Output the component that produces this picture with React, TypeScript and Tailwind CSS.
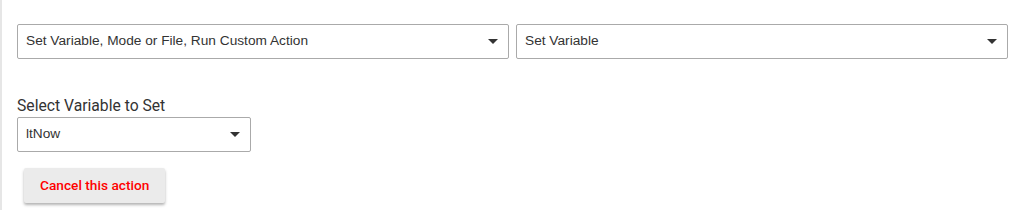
const Caret = () => (
  <svg width="10" height="5" viewBox="0 0 10 5" className="shrink-0">
    <path d="M0 0h10L5 5z" fill="#333" />
  </svg>
)

function Select({ value, className }: { value: string; className: string }) {
  return (
    <div
      className={`flex h-[35px] items-center justify-between rounded-[2px] border border-[#aaa] bg-white pl-[8px] pr-[10px] text-[13.7px] text-[#333] ${className}`}
      style={{ fontFamily: 'Arial, "Liberation Sans", sans-serif' }}
    >
      <span>{value}</span>
      <Caret />
    </div>
  )
}

export default function App() {
  return (
    <div className="h-[210px] w-[1024px] overflow-hidden bg-white">
      <div className="h-full border-l-2 border-[#e6e6e6] pl-[15px] pr-[16px] pt-[24px]">
        {/* action type row */}
        <div className="flex gap-[7px]">
          <Select value="Set Variable, Mode or File, Run Custom Action" className="w-[492px]" />
          <Select value="Set Variable" className="flex-1" />
        </div>

        <div
          className="mt-[37px] text-[15.7px] leading-[20px] text-[#333]"
          style={{ fontFamily: 'Roboto, sans-serif' }}
        >
          Select Variable to Set
        </div>
        <Select value="ltNow" className="mt-[1px] w-[234px]" />

        <button
          className="ml-[7px] mt-[16px] h-[35px] rounded-[2px] bg-[#ebebeb] px-[16px] text-[13.7px] font-medium text-[#f00] shadow-[0_2px_3px_rgba(0,0,0,0.3)]"
          style={{ fontFamily: 'Roboto, sans-serif' }}
        >
          Cancel this action
        </button>
      </div>
    </div>
  )
}
